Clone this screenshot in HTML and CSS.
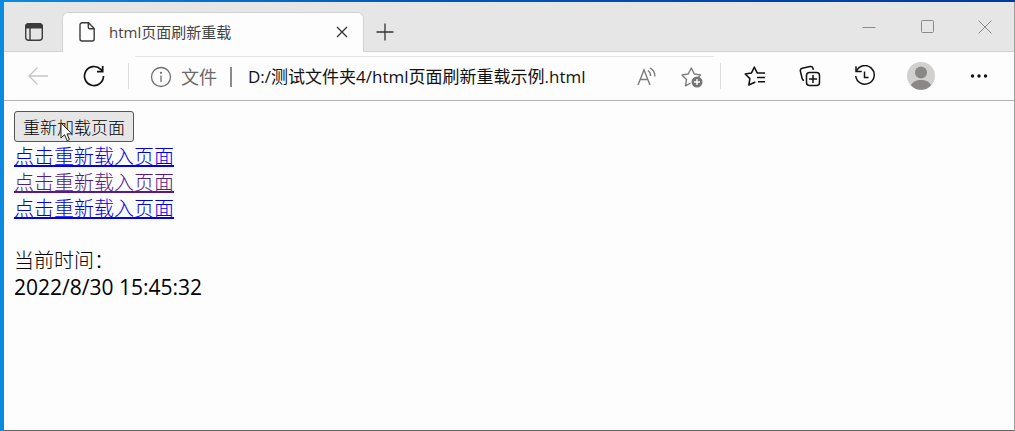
FILE: index.html
```html
<!DOCTYPE html>
<html lang="zh-CN">
<head>
    <meta charset="UTF-8">
    <meta name="viewport" content="width=device-width, initial-scale=1.0">
    <title>html页面刷新重载</title>
    <link rel="stylesheet" href="styles.css">
</head>
<body>
    <div class="window">
        <div class="tab-strip">
            <button class="tab-menu" aria-label="标签操作">
                <svg width="20" height="20" viewBox="0 0 20 20" fill="none" stroke="#3b3b3b" stroke-width="1.4">
                    <rect x="1.7" y="1.7" width="16.6" height="16.6" rx="3"/>
                    <path d="M6 6v12"/>
                    <path d="M2 5.8V4.5A2.5 2.5 0 0 1 4.500 2h11A2.500 2.500 0 0 1 18 4.500v1.300z" fill="#3b3b3b"/>
                </svg>
            </button>
            <div class="tab">
                <svg width="18" height="20" viewBox="0 0 18 20" fill="none" stroke="#3b3b3b" stroke-width="1.4">
                    <path d="M4 .8h6.500L16.200 6.500V17a2 2 0 0 1-2 2H4a2 2 0 0 1-2-2V2.800a2 2 0 0 1 2-2z"/>
                    <path d="M10.300 1v4.200a1.500 1.500 0 0 0 1.500 1.500H16"/>
                </svg>
                <span class="tab-title">html页面刷新重载</span>
                <button class="tab-close" aria-label="关闭标签页">
                    <svg width="12" height="12" viewBox="0 0 12 12" stroke="#333" stroke-width="1.3"><path d="M1 1l10 10M11 1L1 11"/></svg>
                </button>
            </div>
            <button class="new-tab" aria-label="新建标签页">
                <svg width="18" height="18" viewBox="0 0 18 18" stroke="#333" stroke-width="1.3"><path d="M9 .5v17M.5 9h17"/></svg>
            </button>
            <div class="window-buttons">
                <button aria-label="最小化">
                    <svg width="14" height="14" viewBox="0 0 14 14" stroke="#8a8a8a"><path d="M.5 7.500h13"/></svg>
                </button>
                <button aria-label="最大化">
                    <svg width="14" height="14" viewBox="0 0 14 14" fill="none" stroke="#8a8a8a"><rect x="1.500" y=".5" width="12" height="12" rx="1"/></svg>
                </button>
                <button aria-label="关闭">
                    <svg width="14" height="14" viewBox="0 0 14 14" stroke="#8a8a8a"><path d="M.5 .5l13 13M13.500 .5l-13 13"/></svg>
                </button>
            </div>
        </div>

        <div class="toolbar">
            <button class="nav-button" aria-label="后退">
                <svg width="22" height="20" viewBox="0 0 22 20" fill="none" stroke="#c6c6c6" stroke-width="1.4"><path d="M21 10H2M10.500 1.500L2 10l8.500 8.500"/></svg>
            </button>
            <button class="nav-button" aria-label="刷新">
                <svg width="22" height="22" viewBox="0 0 22 22" fill="none" stroke="#111" stroke-width="1.7">
                    <path d="M20.500 11A9.500 9.500 0 1 1 17.800 4.400L19.500 6.300"/>
                    <path d="M19.700 1v5.700H14"/>
                </svg>
            </button>
            <span class="separator"></span>
            <div class="address-bar">
                <svg width="22" height="22" viewBox="0 0 22 22" fill="none" stroke="#707070" stroke-width="1.3">
                    <circle cx="11" cy="11" r="9.500"/>
                    <path d="M11 9.500v6.500"/>
                    <circle cx="11" cy="6.800" r=".5" fill="#707070"/>
                </svg>
                <label class="scheme" for="address">文件</label>
                <input class="address" id="address" type="text" value="D:/测试文件夹4/html页面刷新重载示例.html">
                <button aria-label="大声朗读">
                    <svg width="22" height="22" viewBox="0 0 22 22" fill="none" stroke="#7c7c7c" stroke-width="1.4">
                        <path d="M2 19L8 4l6 15M4.100 13.500h7.800"/>
                        <path d="M11.800 4.500a6 6 0 0 1 2.800 5.500M13.800 1.800a9 9 0 0 1 5 8.700" stroke-width="1.300"/>
                    </svg>
                </button>
                <button aria-label="将此页面添加到收藏夹">
                    <svg width="22" height="22" viewBox="0 0 22 22" fill="none" stroke="#7c7c7c" stroke-width="1.4" stroke-linejoin="round">
                        <path d="M9.500 17l-5 2.800 1-6.300L1 8.900l6.200-.9L10.300 2l3 6 6.200.9-2 2"/>
                        <circle cx="16" cy="16" r="5.500" fill="#757575" stroke="none"/>
                        <path d="M16 13v6M13 16h6" stroke="#fff"/>
                    </svg>
                </button>
            </div>
            <span class="separator"></span>
            <button class="tool-button" aria-label="收藏夹">
                <svg width="22" height="22" viewBox="0 0 22 22" fill="none" stroke="#111" stroke-width="1.5" stroke-linejoin="round">
                    <path d="M11.300 17L4.800 20l1.100-6.400L1.200 9l6.200-.9 2.900-6 3 6h7.700"/>
                    <path d="M13 12.500h8M14 16.700h7"/>
                </svg>
            </button>
            <button class="tool-button" aria-label="集锦">
                <svg width="22" height="22" viewBox="0 0 22 22" fill="none" stroke="#111" stroke-width="1.5">
                    <path d="M5 15.500a2.500 2.500 0 0 1-1.800-1.800L1.400 6.300a2.500 2.500 0 0 1 1.800-3L11 1.500a2.500 2.500 0 0 1 3 1.800l.3 1.500"/>
                    <rect x="7.500" y="7.500" width="13" height="13" rx="3"/>
                    <path d="M14 10v8M10 14h8"/>
                </svg>
            </button>
            <button class="tool-button" aria-label="历史记录">
                <svg width="22" height="22" viewBox="0 0 22 22" fill="none" stroke="#111" stroke-width="1.5">
                    <path d="M2.400 6.200A9.300 9.300 0 1 1 1.700 11"/>
                    <path d="M2 1.200v5.300h5.800M10.500 6.500v6h4"/>
                </svg>
            </button>
            <button class="profile-button" aria-label="个人资料">
                <svg width="28" height="28" viewBox="0 0 28 28">
                    <circle cx="14" cy="14" r="14" fill="#d2d0ce"/>
                    <circle cx="14" cy="10.500" r="6" fill="#8a8886"/>
                    <path d="M4 23.500c1.500-4 5.500-5.500 10-5.500s8.500 1.500 10 5.500a14 14 0 0 1-20 0z" fill="#8a8886"/>
                </svg>
            </button>
            <button class="profile-button" aria-label="设置及其他">
                <svg width="18" height="6" viewBox="0 0 18 6" fill="#111"><circle cx="2.500" cy="3" r="1.700"/><circle cx="9" cy="3" r="1.700"/><circle cx="15.500" cy="3" r="1.700"/></svg>
            </button>
        </div>

        <div class="page">
            <div class="reload-row">
                <button class="reload-button" onclick="location.reload()">重新加载页面</button>
                <svg class="cursor" width="13" height="20" viewBox="0 0 13 20" fill="#fff" stroke="#222"><path d="M1 1v15l3.600-3.300L7.200 18.700l2.300-1-2.500-5.800H12z"/></svg>
            </div>
            <a class="reload-link" href="#">点击重新载入页面</a>
            <a class="reload-link visited" href="#">点击重新载入页面</a>
            <a class="reload-link" href="#">点击重新载入页面</a>
            <div class="time">
                <div>当前时间：</div>
                <div class="time-value">2022/8/30 15:45:32</div>
            </div>
        </div>
    </div>
</body>
</html>
```
FILE: styles.css
```css
* {
    box-sizing: border-box;
}

body {
    margin: 0;
    min-height: 100vh;
    display: flex;
    padding: 2px 0 0 4px;
    background: linear-gradient(to right, #0a8be0, #0059b8 40%, #0039a0);
    font-family: "Open Sans", "Noto Sans CJK SC", sans-serif;
    font-weight: 300;
}

button {
    display: flex;
    align-items: center;
    justify-content: center;
    padding: 0;
    border: none;
    background: transparent;
    font-family: inherit;
    font-weight: inherit;
}

svg {
    flex-shrink: 0;
}

.window {
    flex: 1;
    min-width: 0;
    display: flex;
    flex-direction: column;
    background: #fdfdfd;
    border-right: 1px solid #a0a0a0;
    border-bottom: 1px solid #666;
}

/* 标签栏 */
.tab-strip {
    display: flex;
    height: 50px;
    background: #e6e6e6;
    border-bottom: 1px solid #d2d2d2;
}

.tab-menu {
    width: 58px;
    padding: 11px 0 0 2px;
}

.tab {
    display: flex;
    align-items: center;
    width: 302px;
    height: 40px;
    margin-top: 10px;
    padding: 0 11px 2px 15px;
    background: #fdfdfd;
    border: 1px solid #d2d2d2;
    border-bottom: none;
    border-radius: 6px 6px 0 0;
}

.tab-title {
    flex: 1;
    margin-left: 13px;
    font-size: 15px;
    font-weight: 400;
    line-height: 20px;
    color: #444;
}

.tab-close {
    width: 20px;
    height: 20px;
}

.new-tab {
    width: 42px;
    padding-top: 10px;
}

.window-buttons {
    display: flex;
    margin-left: auto;
}

.window-buttons button {
    width: 58px;
}

/* 工具栏 */
.toolbar {
    display: flex;
    align-items: center;
    height: 49px;
    padding: 0 6px;
    border-bottom: 1px solid #b4b4b4;
}

.nav-button {
    width: 56px;
    height: 40px;
}

.separator {
    width: 1px;
    height: 26px;
    margin: 0 6px;
    background: #ddd;
}

.address-bar {
    flex: 1;
    min-width: 0;
    display: flex;
    align-items: center;
    height: 40px;
    padding-left: 15px;
    border-top: 1px solid #e6e6e6;
}

.scheme {
    margin-left: 9px;
    padding-right: 13px;
    border-right: 2px solid #8a8a8a;
    font-size: 18px;
    font-weight: 400;
    line-height: 20px;
    color: #6a6a6a;
}

.address {
    flex: 1;
    min-width: 0;
    padding: 0 0 0 16px;
    border: none;
    outline: none;
    background: transparent;
    font-family: inherit;
    font-size: 17px;
    line-height: 24px;
    color: #111;
}

.address-bar button {
    width: 45px;
}

.tool-button {
    width: 55px;
    height: 40px;
}

.profile-button {
    width: 58px;
    height: 40px;
}

/* 页面内容 */
.page {
    flex: 1;
    padding: 10px;
    font-size: 20px;
    line-height: 26px;
    color: #000;
}

.reload-row {
    position: relative;
    margin-bottom: 2px;
}

.reload-button {
    height: 31px;
    padding: 0 8px;
    border: 1px solid #555;
    border-radius: 3px;
    background: #e6e6e6;
    font-size: 17px;
    color: #000;
}

.cursor {
    position: absolute;
    top: 11px;
    left: 46px;
}

.reload-link {
    display: block;
    width: fit-content;
    color: #0000ee;
}

.reload-link.visited {
    color: #551a8b;
}

.time {
    margin-top: 26px;
}

.time-value {
    font-size: 21px;
    font-weight: 400;
}
```
